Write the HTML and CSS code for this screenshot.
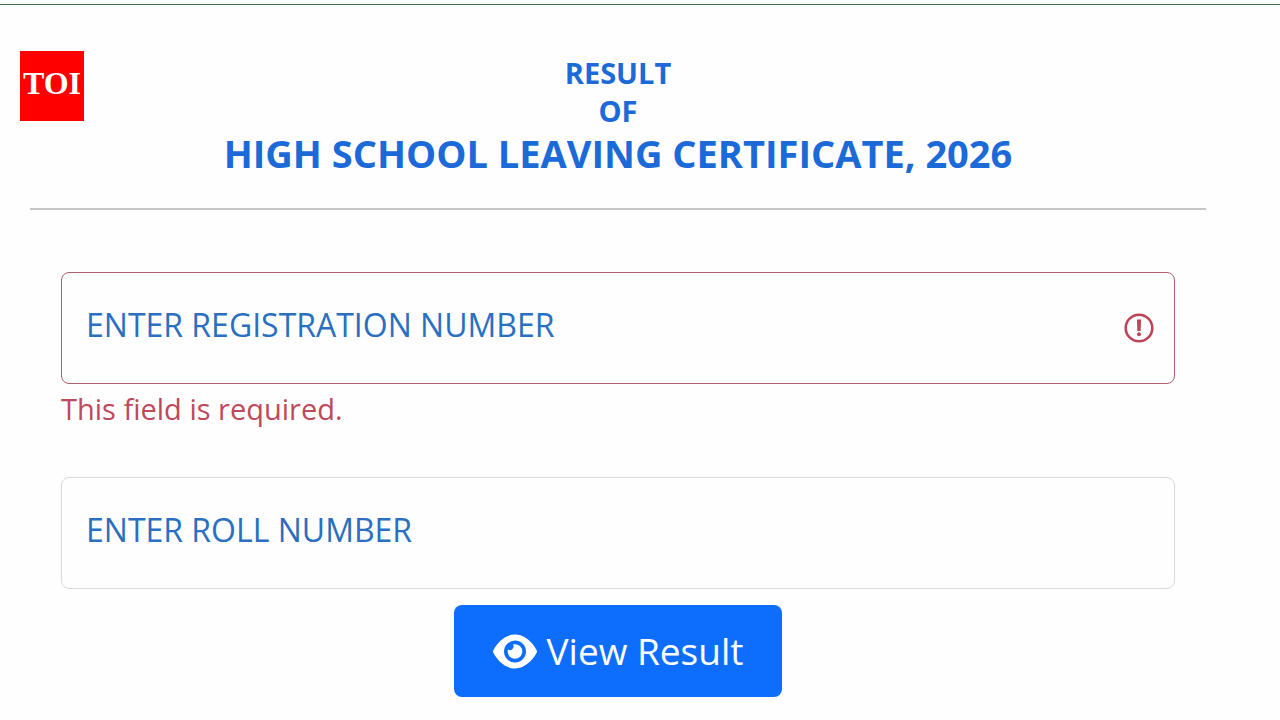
FILE: index.html
```html
<!DOCTYPE html>
<html lang="en">

<head>
    <meta charset="UTF-8">
    <meta name="viewport" content="width=device-width, initial-scale=1.0">
    <title>High School Leaving Certificate Result</title>
    <link rel="stylesheet" href="styles.css">
</head>

<body>

    <div class="top-line"></div>
    <div class="logo">TOI</div>

    <main class="result-box">
        <h1 class="heading">
            <span class="heading__small">RESULT</span>
            <span class="heading__small">OF</span>
            <span class="heading__main">HIGH SCHOOL LEAVING CERTIFICATE, 2026</span>
        </h1>

        <form class="result-form" novalidate>
            <div class="field field--invalid">
                <div class="field__box">
                    <input class="field__input" type="text" id="regno" aria-describedby="regno-error" aria-invalid="true">
                    <label class="field__label" for="regno">ENTER REGISTRATION NUMBER</label>
                    <svg class="field__icon" viewBox="0 0 30 30" aria-hidden="true">
                        <circle cx="15" cy="15" r="13.3" fill="none" stroke="#bd4557" stroke-width="2.6"/>
                        <path d="M12.9 6.5h4.2l-.5 11.5h-3.2z" fill="#bd4557"/>
                        <circle cx="15" cy="21.3" r="2" fill="#bd4557"/>
                    </svg>
                </div>
                <div class="field__error" id="regno-error">This field is required.</div>
            </div>

            <div class="field">
                <div class="field__box">
                    <input class="field__input" type="text" id="rollno">
                    <label class="field__label" for="rollno">ENTER ROLL NUMBER</label>
                </div>
            </div>

            <button class="view-button" type="button">
                <svg class="view-button__icon" viewBox="0 0 576 512" aria-hidden="true">
                    <path fill="#fff" fill-rule="evenodd" d="M572 238C518 132 410 32 288 32S58 132 4 238a38 38 0 0 0 0 36C58 380 166 480 288 480s230-100 284-206a38 38 0 0 0 0-36zM288 400a144 144 0 1 1 0-288 144 144 0 0 1 0 288z"/>
                    <path fill="#fff" d="M288 160c-9 0-18 2-26 4a48 48 0 0 1-66 66c-2 8-4 17-4 26a96 96 0 1 0 96-96z"/>
                </svg>
                View Result
            </button>
        </form>
    </main>

</body>

</html>
```

FILE: styles.css
```css
* {
    box-sizing: border-box;
}

body {
    margin: 0;
    padding-top: 4px;
    background: #fefefe;
    font-family: "Open Sans", "Noto Sans", sans-serif;
}

.top-line {
    height: 1px;
    background: #3d6b52;
}

.logo {
    position: absolute;
    top: 51px;
    left: 20px;
    width: 64px;
    height: 70px;
    background: #ff0000;
    color: #fff;
    font-family: "Liberation Serif", serif;
    font-size: 32px;
    font-weight: bold;
    line-height: 64px;
    text-align: center;
}

.result-box {
    margin: 0 74px 0 30px;
    padding-top: 49px;
}

.heading {
    margin: 0;
    padding-bottom: 32px;
    border-bottom: 2px solid #c6c6c6;
    color: #1b6ad8;
    text-align: center;
    font-weight: bold;
}

.heading__small,
.heading__main {
    display: block;
}

.heading__small {
    font-size: 29px;
    line-height: 38px;
}

.heading__main {
    font-size: 38px;
    line-height: 46px;
}

.result-form {
    padding: 62px 31px 24px;
}

.field {
    margin-bottom: 16px;
}

.field--invalid {
    margin-bottom: 48px;
}

.field__box {
    position: relative;
}

.field__input {
    display: block;
    width: 100%;
    height: 112px;
    padding: 24px;
    border: 1px solid #d8dadc;
    border-radius: 8px;
    background: transparent;
    font-family: inherit;
    font-size: 32px;
}

.field--invalid .field__input {
    border-color: #b2606e;
    padding-right: 72px;
}

.field__label {
    position: absolute;
    top: 31px;
    left: 25px;
    color: #2a6fc0;
    font-size: 32px;
    line-height: 44px;
}

.field__icon {
    position: absolute;
    top: 41px;
    right: 21px;
    width: 30px;
    height: 30px;
}

.field__error {
    padding-top: 5px;
    color: #bd4a5a;
    font-size: 29px;
    line-height: 40px;
}

.view-button {
    display: flex;
    align-items: center;
    justify-content: center;
    gap: 10px;
    margin: 0 auto;
    padding: 20px 39px;
    border: none;
    border-radius: 8px;
    background: #0d6efd;
    color: #fff;
    font-family: inherit;
    font-size: 37px;
    line-height: 52px;
    cursor: pointer;
}

.view-button__icon {
    width: 44px;
    height: 39px;
}
```
